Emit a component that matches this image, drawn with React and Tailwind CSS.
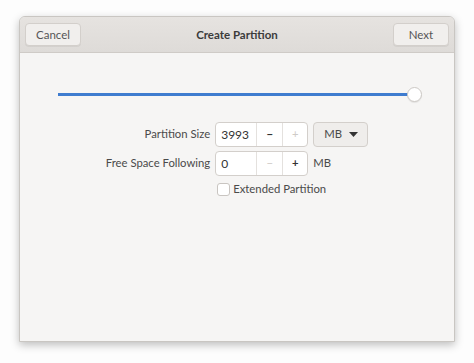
import React from "react";

export default function App() {
  return (
    <div
      className="w-[474px] h-[363px] bg-[#fdfdfd] pl-[19px] pt-[16px]"
      style={{ fontFamily: 'Lato, "Noto Sans", sans-serif' }}
    >
      <div className="w-[436px] h-[326px] flex flex-col bg-[#f6f5f4] border border-[#c9c6c2] rounded-t-[6px] shadow-[0_3px_9px_rgba(0,0,0,0.25)] overflow-hidden">
        {/* Header bar */}
        <div className="h-[36px] shrink-0 flex items-center justify-between px-[5px] bg-gradient-to-b from-[#e6e3e0] to-[#dedbd8] border-b border-[#cfcbc7]">
          <button className="w-[56px] h-[23px] rounded-[4px] border border-[#d3cfcb] bg-[#f1efed] text-[11.5px] text-[#555] shadow-[0_1px_0_rgba(0,0,0,0.05)]">
            Cancel
          </button>
          <div className="text-[11.5px] font-bold text-[#3b3b3b]">Create Partition</div>
          <button className="w-[56px] h-[23px] rounded-[4px] border border-[#d3cfcb] bg-[#f1efed] text-[11.5px] text-[#555] shadow-[0_1px_0_rgba(0,0,0,0.05)]">
            Next
          </button>
        </div>

        {/* Body */}
        <div className="flex flex-col items-center">
          {/* Slider */}
          <div className="w-full pl-[38px] pr-[32px] mt-[33px] h-[16px] flex items-center">
            <div className="flex-1 h-[3px] bg-[#3f7ccf]" />
            <div className="w-[15px] h-[15px] -ml-[7px] rounded-full bg-white border border-[#cdc9c5] shadow-[0_1px_1px_rgba(0,0,0,0.08)]" />
          </div>

          {/* Form grid */}
          <div className="mt-[20px] grid grid-cols-[auto_auto] gap-x-[5px] gap-y-[4px] items-center text-[11.3px] text-[#4a4a4a]">
            <div className="text-right">Partition Size</div>
            <div className="flex items-center gap-[5px]">
              <div className="flex h-[25px] border border-[#d3cfcb] rounded-[4px] bg-white">
                <div className="w-[40px] pl-[5px] flex items-center text-[#333] text-[12px]">3993</div>
                <div className="w-[26px] border-l border-[#e4e1de] flex items-center justify-center text-[#333] font-bold">−</div>
                <div className="w-[25px] border-l border-[#e4e1de] flex items-center justify-center text-[#cfcbc7]">+</div>
              </div>
              <div className="w-[55px] h-[25px] border border-[#d3cfcb] rounded-[4px] bg-[#efedeb] flex items-center justify-between pl-[10px] pr-[9px]">
                <span>MB</span>
                <svg width="9" height="5" viewBox="0 0 9 5">
                  <path d="M0 0 L9 0 L4.5 5 Z" fill="#333" />
                </svg>
              </div>
            </div>

            <div className="text-right">Free Space Following</div>
            <div className="flex items-center gap-[5px]">
              <div className="flex h-[25px] border border-[#d3cfcb] rounded-[4px] bg-white">
                <div className="w-[40px] pl-[5px] flex items-center text-[#333] text-[12px]">0</div>
                <div className="w-[26px] border-l border-[#e4e1de] flex items-center justify-center text-[#cfcbc7]">−</div>
                <div className="w-[25px] border-l border-[#e4e1de] flex items-center justify-center text-[#333] font-bold">+</div>
              </div>
              <span>MB</span>
            </div>

            <div />
            <div className="flex items-center gap-[3px] pl-[2px] mt-[1px]">
              <div className="w-[13px] h-[13px] rounded-[3px] border border-[#c9c5c1] bg-white" />
              <span>Extended Partition</span>
            </div>
          </div>
        </div>
      </div>
    </div>
  );
}
